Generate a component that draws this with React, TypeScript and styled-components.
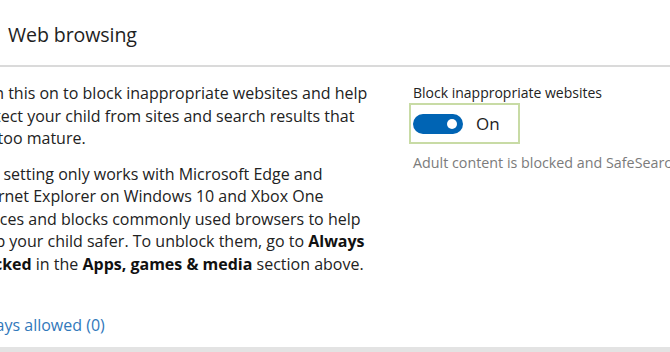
import React from "react";
import styled, { createGlobalStyle } from "styled-components";

const Global = createGlobalStyle`
  html, body { margin: 0; padding: 0; background: #ffffff; }
  body { width: 670px; height: 352px; overflow: hidden; font-family: "Open Sans", "Noto Sans", sans-serif; color: #222222; }
`;

const Page = styled.div`
  width: 760px;
  margin-left: -31px;
  height: 352px;
  display: flex;
  flex-direction: column;
`;

const Header = styled.div`
  display: flex;
  align-items: center;
  padding-left: 39px;
  border-bottom: 2px solid #dadada;
  box-sizing: border-box;
  height: 67px;
`;

const Title = styled.h2`
  margin: 0;
  margin-top: 4px;
  font-size: 19.6px;
  font-weight: 400;
  color: #1e1e1e;
  letter-spacing: -0.1px;
`;

const Body = styled.div`
  flex: 1;
  display: flex;
  padding-top: 15px;
  border-bottom: 5px solid #e3e3e3;
`;

const LeftCol = styled.div`
  width: 444px;
  display: flex;
  flex-direction: column;
`;

const Para = styled.p`
  margin: 0 0 13px 0;
  font-size: 16px;
  line-height: 22.5px;
  white-space: nowrap;
  color: #222222;
  b { font-weight: 700; color: #111111; }
`;

const Link = styled.a`
  margin-top: 26px;
  font-size: 16px;
  color: #3178bb;
  text-decoration: none;
`;

const RightCol = styled.div`
  display: flex;
  flex-direction: column;
  align-items: flex-start;
`;

const Label = styled.div`
  font-size: 14px;
  line-height: 18px;
  margin-top: 2px;
  color: #222222;
`;

const ToggleBox = styled.div`
  margin-top: 1px;
  margin-left: -4px;
  width: 111px;
  height: 41px;
  box-sizing: border-box;
  border: 2px solid #c8dba5;
  display: flex;
  align-items: center;
  padding-left: 2px;
  gap: 13px;
`;

const Track = styled.div<{ $on: boolean }>`
  width: 50px;
  height: 20px;
  border-radius: 10px;
  background: ${(p) => (p.$on ? "#0064b4" : "#cccccc")};
  position: relative;
`;

const Knob = styled.div<{ $on: boolean }>`
  position: absolute;
  top: 5px;
  ${(p) => (p.$on ? "right: 6px;" : "left: 6px;")}
  width: 10px;
  height: 10px;
  border-radius: 50%;
  background: #ffffff;
`;

const ToggleText = styled.span`
  font-size: 17px;
  color: #1e1e1e;
`;

const Hint = styled.div`
  margin-top: 9px;
  font-size: 14.3px;
  color: #7b7b7b;
  white-space: nowrap;
`;

export default function App() {
  return (
    <>
      <Global />
      <Page>
        <Header>
          <Title>Web browsing</Title>
        </Header>
        <Body>
          <LeftCol>
            <Para>
              Turn this on to block inappropriate websites and help
              <br />
              protect your child from sites and search results that
              <br />
              are too mature.
            </Para>
            <Para>
              This setting only works with Microsoft Edge and
              <br />
              Internet Explorer on Windows 10 and Xbox One
              <br />
              devices and blocks commonly used browsers to help
              <br />
              keep your child safer. To unblock them, go to <b>Always</b>
              <br />
              <b>blocked</b> in the <b>Apps, games &amp; media</b> section above.
            </Para>
            <Link href="#">Always allowed (0)</Link>
          </LeftCol>
          <RightCol>
            <Label>Block inappropriate websites</Label>
            <ToggleBox>
              <Track $on={true}>
                <Knob $on={true} />
              </Track>
              <ToggleText>On</ToggleText>
            </ToggleBox>
            <Hint>Adult content is blocked and SafeSearch is on.</Hint>
          </RightCol>
        </Body>
      </Page>
    </>
  );
}
